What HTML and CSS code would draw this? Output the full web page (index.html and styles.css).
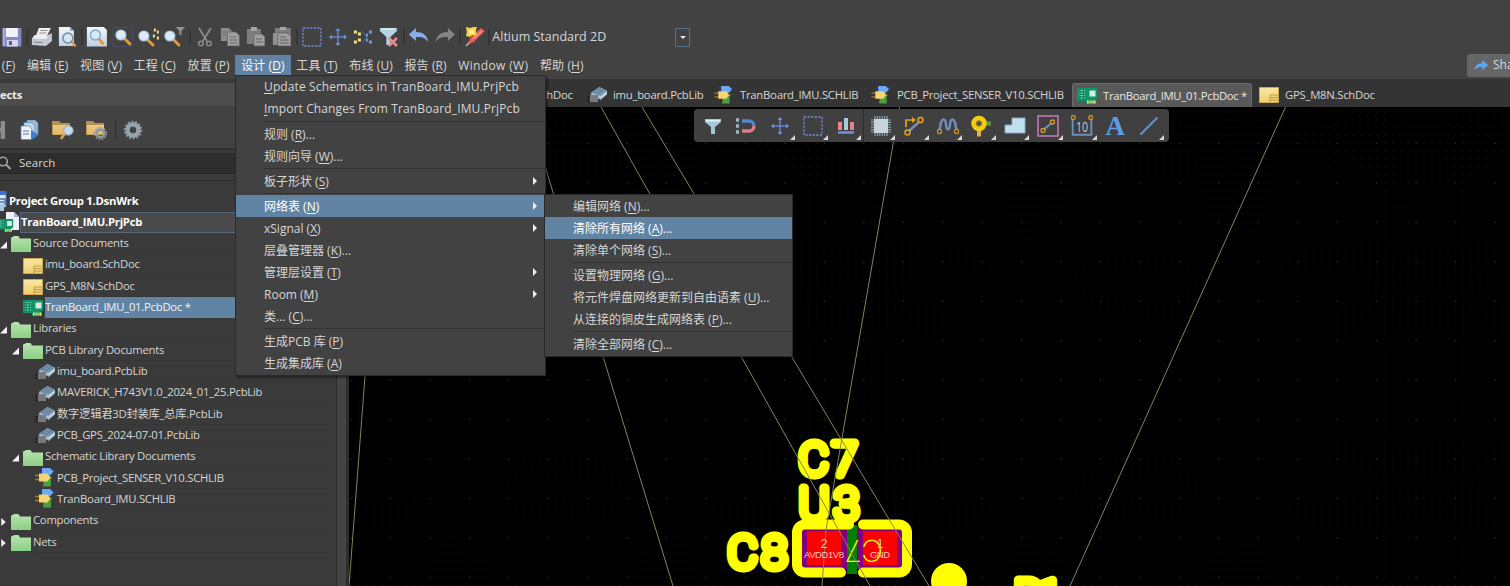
FILE: index.html
```html
<!DOCTYPE html>
<html lang="zh-CN">
<head>
    <meta charset="UTF-8">
    <title>TranBoard_IMU_01.PcbDoc</title>
    <link rel="stylesheet" href="styles.css">
</head>
<body>
<!-- 图标 -->
<svg class="sprite" width="0" height="0">
    <defs>
        <linearGradient id="gFolder" x1="0" y1="0" x2="0" y2="1"><stop offset="0" stop-color="#b8e3b0"/><stop offset="1" stop-color="#8ccf84"/></linearGradient>
        <linearGradient id="gSch" x1="0" y1="0" x2="0" y2="1"><stop offset="0" stop-color="#fae6a4"/><stop offset="1" stop-color="#efd06e"/></linearGradient>
        <linearGradient id="gPaper" x1="0" y1="0" x2="0" y2="1"><stop offset="0" stop-color="#f4f7fb"/><stop offset="1" stop-color="#bfd0e2"/></linearGradient>
        <linearGradient id="gDir" x1="0" y1="0" x2="0" y2="1"><stop offset="0" stop-color="#e9c98c"/><stop offset="1" stop-color="#e3b868"/></linearGradient>
    </defs>
    <symbol id="i-save" viewBox="0 0 20 20"><path d="M.5 1h19v18.500h-19z" fill="#8688c4"/><path d="M4 1h12v9H4z" fill="#f1f2fa"/><path d="M1 1h2v18H1z" fill="#a9abdc"/><path d="M5 13h11v6.500H5z" fill="#d5d7e6"/><path d="M7 14h3v4H7z" fill="#565a8c"/></symbol>
    <symbol id="i-print" viewBox="0 0 20 20"><path d="M7 1h12l-4 8H4z" fill="#f3f3f3"/><path d="M8.500 3.500h7M7.500 6h7" stroke="#8b8b8b"/><path d="M3 8l13 1 4-3v8l-6 5-14-1v-6z" fill="#c5cbd1"/><path d="M3 8l12 1 4-3-5 6-14-.5z" fill="#eef1f3"/><path d="M2 15l9 .7" stroke="#7d8790"/></symbol>
    <symbol id="i-mag" viewBox="0 0 20 20"><path d="M11.500 11.500l5.500 5.500" stroke="#e39a3c" stroke-width="3" stroke-linecap="round"/><circle cx="8" cy="8" r="5" fill="#deebf7" stroke="#a9c7e2" stroke-width="1.200"/></symbol>
    <symbol id="i-preview" viewBox="0 0 20 20"><path d="M1 0h11l4 4v15H1z" fill="url(#gPaper)"/><path d="M12 0v4h4z" fill="#96a9be"/><path d="M13.500 14.500l3.500 4" stroke="#e39a3c" stroke-width="2.500" stroke-linecap="round"/><circle cx="10" cy="11" r="5" fill="#d3e5f3" stroke="#6f8aa5" stroke-width="1.400"/></symbol>
    <symbol id="i-zdoc" viewBox="0 0 20 20"><path d="M0 0h17l3 3v16.500H0z" fill="url(#gPaper)"/><path d="M12 12l4 4.500" stroke="#e39a3c" stroke-width="2.800" stroke-linecap="round"/><circle cx="8.500" cy="8" r="5" fill="#d6ebf8" stroke="#7aa5cc" stroke-width="1.300"/></symbol>
    <symbol id="i-zarea" viewBox="0 0 20 20"><path d="M.5.5h19v19H.5z" fill="none" stroke="#4a5796" stroke-dasharray="1 1"/><use href="#i-mag"/></symbol>
    <symbol id="i-zsel" viewBox="0 0 20 20"><use href="#i-mag" x="-3" y="1" width="20" height="20"/><path d="M15 3h2M18 5h2M14 9h2M18 11h2" stroke="#f2dc8a" stroke-width="3"/></symbol>
    <symbol id="i-zflt" viewBox="0 0 20 20"><use href="#i-mag" x="-3" y="1" width="20" height="20"/><path d="M11 0h9l-3.500 4v4h-2V4z" fill="#8e969c"/></symbol>
    <symbol id="i-cut" viewBox="0 0 20 20"><path d="M4 1l8 13M16 1L8 14" stroke="#8a8a8a" stroke-width="1.800"/><circle cx="6" cy="16.500" r="2.300" fill="none" stroke="#8a8a8a" stroke-width="1.500"/><circle cx="14" cy="16.500" r="2.300" fill="none" stroke="#8a8a8a" stroke-width="1.500"/></symbol>
    <symbol id="i-copy" viewBox="0 0 20 20"><path d="M1 1h8l3 3v10H1z" fill="#8b8b8b"/><path d="M7.500 5h8.500l3.500 3.500V19h-12z" fill="#a0a0a0" stroke="#5d5d5d" stroke-width=".7"/><path d="M9.500 10h7M9.500 13h8M9.500 16h8M3 5h3M3 8h3" stroke="#6b6b6b"/></symbol>
    <symbol id="i-paste" viewBox="0 0 20 20"><path d="M1 2h14v15H1z" fill="#7d7d7d"/><path d="M5 0h6v4H5z" fill="#a6a6a6"/><path d="M8 7h8l3 3v9H8z" fill="#a0a0a0" stroke="#5d5d5d" stroke-width=".7"/><path d="M10 12h6M10 15h7" stroke="#636363"/></symbol>
    <symbol id="i-paste2" viewBox="0 0 20 20"><path d="M3 1h16v14H3z" fill="#7d7d7d"/><path d="M8 0h6v3H8z" fill="#a6a6a6"/><path d="M1 6h8v12H1z" fill="#919191"/><path d="M6 6h9l4 3v10H6z" fill="#a0a0a0" stroke="#5d5d5d" stroke-width=".7"/><path d="M8 10h6M8 13h9M8 16h9" stroke="#636363"/></symbol>
    <symbol id="i-select" viewBox="0 0 20 20"><path d="M1 1h18v18H1z" fill="none" stroke="#6f8ede" stroke-width="1.300" stroke-dasharray="2.200 1.400"/></symbol>
    <symbol id="i-move" viewBox="0 0 20 20"><path d="M10 3v14M3 10h14" stroke="#5f84cf" stroke-width="1.500"/><path d="M10 1l2.500 3h-5zM10 19l2.500-3h-5zM1 10l3-2.500v5zM19 10l-3-2.500v5z" fill="#6d91dc"/></symbol>
    <symbol id="i-unsel" viewBox="0 0 20 20"><path d="M1 5h3M5 7h3M1 15h3M5 13h3" stroke="#f6e27c" stroke-width="3"/><path d="M9 4l5 6-5 6" fill="none" stroke="#4b66a9"/><path d="M16 5h3M13 8h2M16 15h3M13 13h2" stroke="#6c9be8" stroke-width="3"/></symbol>
    <symbol id="i-noflt" viewBox="0 0 20 20"><path d="M1 1h17v3l-6.500 6v8h-4v-8L1 4z" fill="#b4d6e4"/><path d="M3 2h13" stroke="#e4f4fa"/><path d="M10 11l8 8M18 11l-8 8" stroke="#e98989" stroke-width="2.600"/></symbol>
    <symbol id="i-undo" viewBox="0 0 20 20"><path d="M0 7.500L7 1v4c7 0 11 3 12.500 10C16 10.500 13 9.500 7 10v4z" fill="#86aee8"/></symbol>
    <symbol id="i-redo" viewBox="0 0 20 20"><path d="M20 7.500L13 1v4C6 5 2 8 .5 15 4 10.500 7 9.500 13 10v4z" fill="#858585"/></symbol>
    <symbol id="i-wand" viewBox="0 0 20 20"><path d="M2 18l4-8 10-9 4 3L9 15z" fill="#e35f55"/><path d="M8 12l9-8" stroke="#f79d8f" stroke-width="1.500"/><path d="M1 19l3-3" stroke="#bbb" stroke-width="1.500"/><path d="M1 0l4 1 3-1 4 0-1 4 1 5-4-1-3 2-4-1 1-4z" fill="#f3d23f"/><path d="M4 3h5v4H4z" fill="#fdf3a2"/></symbol>

    <symbol id="i-folder" viewBox="0 0 20 16"><path d="M0 2.500C0 1.500.5 1 1.500 1L3 0h4.500L9 2.500h11V16H0z" fill="url(#gFolder)"/></symbol>
    <symbol id="i-sch" viewBox="0 0 20 16"><path d="M.5.5h19v15H.5z" fill="url(#gSch)" stroke="#cda84f"/><path d="M11 15V8h8M11 10.500h8M11 13h8" fill="none" stroke="#b08c36" stroke-width=".8"/></symbol>
    <symbol id="i-pcb" viewBox="0 0 20 16"><path d="M0 0h20v11h-2v5H9v-3H0z" fill="#109468"/><path d="M2 2.500h6M2 5h6M2 7.500h6M2 10h6" stroke="#74d7ae"/><path d="M3 1v11M6.500 1v11" stroke="#0a6649" stroke-width=".7"/><path d="M12.500 2.500h6v6h-6z" fill="#dbe8e2"/><path d="M10 12.500h8.500v3H10z" fill="#dff07b"/><path d="M12 12v4M14 12v4M16 12v4" stroke="#168154" stroke-width=".7"/></symbol>
    <symbol id="i-plib" viewBox="0 0 21 17"><path d="M4 7l9-7 8 4v4l-7 6-9-4z" fill="#a9bfd2"/><path d="M4 6l9-6 8 4-7 5.500z" fill="#7492ac"/><path d="M7 6l8-5M10 7.500l8-5" stroke="#56718b" stroke-width=".7"/><path d="M14 11l7-5" stroke="#e3ebf1"/><path d="M3 8.500h8.500V16H3z" fill="#76797d"/><path d="M0 10h3M0 12.500h3M0 15h3M12 13h2" stroke="#1b1b1b" stroke-width="1.100"/></symbol>
    <symbol id="i-slib" viewBox="0 0 20 19"><path d="M9 9h7v9.500H8z" fill="#4aa03c"/><path d="M4 2h16" stroke="#1c428e" stroke-width="1.600"/><path d="M7 0h8l3.500 3.500L15 7.500H7z" fill="#6ea9f8"/><path d="M0 7.500h5M0 11.500h5M13 9.500h4" stroke="#a47e1b" stroke-width="1.500"/><path d="M4 5.500h8.500l3 4-3 4H4z" fill="#f3d578"/></symbol>
    <symbol id="i-open" viewBox="0 0 7 7"><path d="M7 0v7H0z" fill="#f2f2f2"/></symbol>
    <symbol id="i-shut" viewBox="0 0 7 9"><path d="M1 0l5 4.500L1 9z" fill="#f2f2f2"/></symbol>

    <symbol id="i-docs" viewBox="0 0 20 20"><path d="M7 0h8l3 3v11H7z" fill="#9dbbd9" stroke="#5c86b0" stroke-width=".7"/><path d="M4 2.500h8l3 3V17H4z" fill="#c0d6ea" stroke="#5c86b0" stroke-width=".7"/><path d="M1 6h8l3 3v10.500H1z" fill="#eef4fa" stroke="#5c86b0" stroke-width=".7"/><path d="M3 11h6M3 14h6" stroke="#55789c"/><path d="M11 10l8 5-8 5z" fill="#3e7ed1"/></symbol>
    <symbol id="i-find" viewBox="0 0 22 20"><path d="M0 1h7l2 2h9v12H0z" fill="#b98f4e"/><path d="M1 5h17v9.500H1z" fill="url(#gDir)"/><path d="M12.500 14L9 19" stroke="#dba452" stroke-width="2.600"/><circle cx="16.500" cy="10.500" r="4.700" fill="#c5dcec" stroke="#8da9bd"/></symbol>
    <symbol id="i-dirset" viewBox="0 0 22 20"><path d="M0 1h7l2 2h9v12H0z" fill="#b98f4e"/><path d="M1 5h17v9.500H1z" fill="url(#gDir)"/><circle cx="14.500" cy="13.500" r="5.800" fill="none" stroke="#8d9ba1" stroke-width="1.600" stroke-dasharray="1.800 1.200"/><circle cx="14.500" cy="13.500" r="3.800" fill="none" stroke="#8d9ba1" stroke-width="2.600"/></symbol>
    <symbol id="i-gear" viewBox="0 0 20 20"><circle cx="10" cy="10" r="8.300" fill="none" stroke="#8d9aa3" stroke-width="2" stroke-dasharray="2 1.720"/><circle cx="10" cy="10" r="5.500" fill="none" stroke="#95a3ac" stroke-width="4.500"/></symbol>
    <symbol id="i-disk" viewBox="0 0 20 20"><path d="M0 1h19v18H0z" fill="#8b8b8b"/><path d="M4 1h11v7H4zM5 12h10v7H5z" fill="#5a5a5a"/><path d="M12 13h2v5h-2zM12 2h2v5h-2z" fill="#a7a7a7"/></symbol>
    <symbol id="i-search" viewBox="0 0 14 14"><circle cx="5" cy="5.500" r="4.300" fill="none" stroke="#a2a2a2" stroke-width="1.600"/><path d="M8 8.500l4.500 4.500" stroke="#a2a2a2" stroke-width="2"/></symbol>
    <symbol id="i-prj" viewBox="0 0 22 20"><path d="M8 0h8l5 5v13H8z" fill="#eef0f8"/><path d="M16 0v5h5z" fill="#aab1cb"/><use href="#i-pcb" x="-2" y="7" width="18" height="13"/></symbol>
    <symbol id="i-grp" viewBox="0 0 20 20"><path d="M0 0h19v16H0z" fill="#dbe7f6" stroke="#4d7bc8"/><path d="M0 0h19v4H0z" fill="#3c73d3"/><path d="M13 8h5v6M13 11h4" stroke="#52749c" stroke-width="1.500" fill="none"/><path d="M12 13h5v7h-5z" fill="#afc5de"/></symbol>

    <symbol id="i-filter" viewBox="0 0 20 20"><path d="M2 3h16v3l-6 5v7H8v-7L2 6z" fill="#a3c9d8"/><path d="M3 4h14v1.500H3z" fill="#def1f7"/></symbol>
    <symbol id="i-magnet" viewBox="0 0 20 20"><path d="M0 4h3M0 10h3M0 16h3" stroke="#9eb6bd" stroke-width="3.500"/><path d="M6 5h7a5 5 0 0 1 5 5" fill="none" stroke="#5585d3" stroke-width="3.300"/><path d="M18 10a5 5 0 0 1-5 5H6" fill="none" stroke="#df7e84" stroke-width="3.300"/></symbol>
    <symbol id="i-align" viewBox="0 0 20 20"><path d="M2 6h4v8H2zM14 6h4v8h-4z" fill="#ea8389"/><path d="M8 2h4v12H8z" fill="#a5cbd8"/><path d="M2 16.500h16" stroke="#7390dc" stroke-width="2.500"/></symbol>
    <symbol id="i-chip" viewBox="0 0 20 20"><path d="M4 0v20M6.400 0v20M8.800 0v20M11.200 0v20M13.600 0v20M16 0v20M0 4h20M0 6.400h20M0 8.800h20M0 11.200h20M0 13.600h20M0 16h20" stroke="#8ca9b8" stroke-width="1.100"/><path d="M3 3h14v14H3z" fill="#c8d3da"/></symbol>
    <symbol id="i-route" viewBox="0 0 20 20"><path d="M5 15L15 6" stroke="#718fb9" stroke-width="2.500"/><path d="M2 11V4h8" fill="none" stroke="#e1a31d" stroke-width="1.700"/><path d="M8 1l4 3-4 3z" fill="#e1a31d"/><circle cx="3.500" cy="16.500" r="2.500" fill="#404040" stroke="#e1a31d" stroke-width="1.500"/><circle cx="16.500" cy="4" r="2.500" fill="#404040" stroke="#e1a31d" stroke-width="1.500"/></symbol>
    <symbol id="i-tune" viewBox="0 0 20 20"><path d="M2 14c1.500-2 .5-10 4-10s1 9 4 9 .5-9 4-9 2.500 8 4 10" fill="none" stroke="#6d8ebb" stroke-width="2.300"/><circle cx="2.200" cy="15" r="1.900" fill="#404040" stroke="#d09421" stroke-width="1.200"/><circle cx="17.800" cy="15" r="1.900" fill="#404040" stroke="#d09421" stroke-width="1.200"/></symbol>
    <symbol id="i-via" viewBox="0 0 22 21"><path d="M12 6h9v4h-9z" fill="#5a9d34"/><path d="M7 13h4v8H7z" fill="#e7a95c"/><circle cx="9" cy="8" r="5.300" fill="none" stroke="#f0cc15" stroke-width="5"/><circle cx="9" cy="8" r="2.700" fill="#505050" stroke="#aa8614"/></symbol>
    <symbol id="i-poly" viewBox="0 0 22 20"><path d="M1 17V9h7V2h13v15z" fill="#bfe0ee" stroke="#8ba6c7"/></symbol>
    <symbol id="i-room" viewBox="0 0 22 22"><path d="M1 1h20v20H1z" fill="none" stroke="#cb78bb" stroke-width="1.500"/><path d="M6 15l10-8" stroke="#7190bb" stroke-width="2.200"/><circle cx="6" cy="15.500" r="2" fill="#404040" stroke="#d59b28" stroke-width="1.300"/><circle cx="15.500" cy="7" r="2" fill="#404040" stroke="#d59b28" stroke-width="1.300"/></symbol>
    <symbol id="i-dim" viewBox="0 0 20 20"><path d="M1.500 4v14h17V4" fill="none" stroke="#6d8ebb" stroke-width="1.700"/><circle cx="2" cy="2.300" r="1.800" fill="#404040" stroke="#d09421" stroke-width="1.200"/><circle cx="18" cy="2.300" r="1.800" fill="#404040" stroke="#d09421" stroke-width="1.200"/><text x="10" y="15" font-size="12.500" text-anchor="middle" fill="#c9c9c9" textLength="11" lengthAdjust="spacingAndGlyphs">10</text></symbol>
    <symbol id="i-line" viewBox="0 0 20 20"><path d="M1.500 18.500l17-17" stroke="#5b94dc" stroke-width="2"/></symbol>
    <symbol id="i-share" viewBox="0 0 16 14"><path d="M0 12C1 7 4 4.500 9 4.500V1l6 5.500-6 5.500V8.500C5 8.500 3 9 0 12z" fill="#59a7f5"/></symbol>
</svg>

<div class="ribbon">
    <div class="toolbar">
        <svg class="tool"><use href="#i-save"/></svg><i class="sep"></i>
        <svg class="tool"><use href="#i-print"/></svg>
        <svg class="tool"><use href="#i-preview"/></svg><i class="sep"></i>
        <svg class="tool"><use href="#i-zdoc"/></svg>
        <svg class="tool"><use href="#i-zarea"/></svg>
        <svg class="tool"><use href="#i-zsel"/></svg>
        <svg class="tool"><use href="#i-zflt"/></svg><i class="sep"></i>
        <svg class="tool"><use href="#i-cut"/></svg>
        <svg class="tool"><use href="#i-copy"/></svg>
        <svg class="tool"><use href="#i-paste"/></svg>
        <svg class="tool"><use href="#i-paste2"/></svg><i class="sep"></i>
        <svg class="tool"><use href="#i-select"/></svg>
        <svg class="tool"><use href="#i-move"/></svg>
        <svg class="tool"><use href="#i-unsel"/></svg>
        <svg class="tool"><use href="#i-noflt"/></svg><i class="sep"></i>
        <svg class="tool"><use href="#i-undo"/></svg>
        <svg class="tool"><use href="#i-redo"/></svg><i class="sep"></i>
        <svg class="tool"><use href="#i-wand"/></svg><i class="sep"></i>
        <div class="combo"><span>Altium Standard 2D</span><b></b></div>
    </div>
    <div class="menubar">
        <div class="item">(<u>F</u>)</div>
        <div class="item">编辑 (<u>E</u>)</div>
        <div class="item">视图 (<u>V</u>)</div>
        <div class="item">工程 (<u>C</u>)</div>
        <div class="item">放置 (<u>P</u>)</div>
        <div class="item on">设计 (<u>D</u>)</div>
        <div class="item">工具 (<u>T</u>)</div>
        <div class="item">布线 (<u>U</u>)</div>
        <div class="item">报告 (<u>R</u>)</div>
        <div class="item win">Window (<u>W</u>)</div>
        <div class="item">帮助 (<u>H</u>)</div>
        <div class="share"><svg><use href="#i-share"/></svg>Share</div>
    </div>
</div>

<div class="main">
    <div class="panel">
        <div class="panel-title">ects</div>
        <div class="panel-tools">
            <svg class="disk"><use href="#i-disk"/></svg>
            <svg><use href="#i-docs"/></svg>
            <svg class="wide"><use href="#i-find"/></svg>
            <svg class="wide"><use href="#i-dirset"/></svg>
            <i class="sep"></i>
            <svg><use href="#i-gear"/></svg>
        </div>
        <div class="search"><svg><use href="#i-search"/></svg>Search</div>
        <div class="tree-wrap">
            <div class="tree">
                <div class="row root"><svg class="grp"><use href="#i-grp"/></svg><span>Project Group 1.DsnWrk</span></div>
                <div class="row root prj"><svg class="prjico"><use href="#i-prj"/></svg><span>TranBoard_IMU.PrjPcb</span></div>
                <div class="row l1"><svg class="arr"><use href="#i-open"/></svg><svg class="ico"><use href="#i-folder"/></svg><span>Source Documents</span></div>
                <div class="row l2"><svg class="ico"><use href="#i-sch"/></svg><span>imu_board.SchDoc</span></div>
                <div class="row l2"><svg class="ico"><use href="#i-sch"/></svg><span>GPS_M8N.SchDoc</span></div>
                <div class="row l2 cur"><svg class="ico"><use href="#i-pcb"/></svg><span>TranBoard_IMU_01.PcbDoc *</span></div>
                <div class="row l1"><svg class="arr"><use href="#i-open"/></svg><svg class="ico"><use href="#i-folder"/></svg><span>Libraries</span></div>
                <div class="row l2"><svg class="arr"><use href="#i-open"/></svg><svg class="ico"><use href="#i-folder"/></svg><span>PCB Library Documents</span></div>
                <div class="row l3"><svg class="ico"><use href="#i-plib"/></svg><span>imu_board.PcbLib</span></div>
                <div class="row l3"><svg class="ico"><use href="#i-plib"/></svg><span>MAVERICK_H743V1.0_2024_01_25.PcbLib</span></div>
                <div class="row l3"><svg class="ico"><use href="#i-plib"/></svg><span>数字逻辑君3D封装库_总库.PcbLib</span></div>
                <div class="row l3"><svg class="ico"><use href="#i-plib"/></svg><span>PCB_GPS_2024-07-01.PcbLib</span></div>
                <div class="row l2"><svg class="arr"><use href="#i-open"/></svg><svg class="ico"><use href="#i-folder"/></svg><span>Schematic Library Documents</span></div>
                <div class="row l3"><svg class="ico tall"><use href="#i-slib"/></svg><span>PCB_Project_SENSER_V10.SCHLIB</span></div>
                <div class="row l3"><svg class="ico tall"><use href="#i-slib"/></svg><span>TranBoard_IMU.SCHLIB</span></div>
                <div class="row l1"><svg class="arr"><use href="#i-shut"/></svg><svg class="ico"><use href="#i-folder"/></svg><span>Components</span></div>
                <div class="row l1"><svg class="arr"><use href="#i-shut"/></svg><svg class="ico"><use href="#i-folder"/></svg><span>Nets</span></div>
            </div>
            <div class="scroll"></div>
        </div>
    </div>

    <div class="editor">
        <div class="tabs">
            <div class="tab t1">GPS_M8N.SchDoc</div>
            <div class="tab t2"><svg><use href="#i-plib"/></svg>imu_board.PcbLib</div>
            <div class="tab t3"><svg><use href="#i-slib"/></svg>TranBoard_IMU.SCHLIB</div>
            <div class="tab t4"><svg><use href="#i-slib"/></svg>PCB_Project_SENSER_V10.SCHLIB</div>
            <div class="tab t5 on"><svg><use href="#i-pcb"/></svg>TranBoard_IMU_01.PcbDoc *</div>
            <div class="tab t6"><svg><use href="#i-sch"/></svg>GPS_M8N.SchDoc</div>
        </div>
        <div class="board">
            <svg class="pcb" viewBox="349 107 1161 479">
                <defs>
                    <pattern id="minor" x="705.500" y="458.500" width="7.890" height="7.890" patternUnits="userSpaceOnUse"><path d="M0 0h1v1H0z" fill="#1c1c1c"/></pattern>
                    <pattern id="major" x="705.500" y="458.500" width="39.450" height="39.450" patternUnits="userSpaceOnUse"><path d="M0 0h1v1H0z" fill="#3c3c3c"/></pattern>
                </defs>
                <path d="M349 107h1161v479H349z" fill="url(#minor)"/>
                <path d="M349 107h1161v479H349z" fill="url(#major)"/>

                <!-- 焊盘 -->
                <path d="M800 527h104v42H800z" fill="#800080"/>
                <path d="M847 525h10v49h-10z" fill="#008000"/>
                <path d="M807 531h34v34h-34zM863 531h34v34h-34z" fill="#f00"/>
                <!-- 丝印 -->
                <path class="silk" d="M841 572.500h-36a8 8 0 0 1-8-8v-32a8 8 0 0 1 8-8h44M863 524.500h36a8 8 0 0 1 8 8v32a8 8 0 0 1-8 8h-36"/>
                <text class="desig" x="799 832.500" y="475">C7</text>
                <text class="desig" x="799 834" y="520">U3</text>
                <text class="desig" x="728 762" y="568">C8</text>
                <text class="desig" x="1014 1038" y="612">R1</text>
                <circle cx="949" cy="581" r="18" fill="#ff0"/>
                <text class="ref" transform="rotate(180 864 551)" x="845" y="562" textLength="38">C7</text>

                <!-- 飞线 -->
                <g class="rats">
                    <path d="M601 107L870 586M642 107L929 586M527 107L673 586M899.500 107L826 530l-4 56M1285.500 107L1070 586M365 376L349 586"/>
                </g>
                <text class="net two" x="824" y="548">2</text>
                <text class="net" x="824" y="557.500" textLength="40">AVDD1V8</text>
                <text class="net two" x="880" y="548">1</text>
                <text class="net" x="880" y="557.500" textLength="20">GND</text>
            </svg>
            <div class="active-bar">
                <div class="act"><svg><use href="#i-filter"/></svg></div>
                <div class="act"><svg><use href="#i-magnet"/></svg></div>
                <div class="act more"><svg><use href="#i-move"/></svg></div>
                <div class="act more"><svg><use href="#i-select"/></svg></div>
                <div class="act more line"><svg><use href="#i-align"/></svg></div>
                <div class="act more"><svg><use href="#i-chip"/></svg></div>
                <div class="act more"><svg><use href="#i-route"/></svg></div>
                <div class="act more"><svg class="big"><use href="#i-tune"/></svg></div>
                <div class="act more"><svg class="big"><use href="#i-via"/></svg></div>
                <div class="act more"><svg class="big"><use href="#i-poly"/></svg></div>
                <div class="act more"><svg class="big"><use href="#i-room"/></svg></div>
                <div class="act more"><svg class="big"><use href="#i-dim"/></svg></div>
                <div class="act"><b>A</b></div>
                <div class="act more"><svg><use href="#i-line"/></svg></div>
            </div>
        </div>
    </div>
</div>

<div class="menu design">
    <div class="mi en"><u>U</u>pdate Schematics in TranBoard_IMU.PrjPcb</div>
    <div class="mi en"><u>I</u>mport Changes From TranBoard_IMU.PrjPcb</div>
    <hr>
    <div class="mi">规则 (<u>R</u>)...</div>
    <div class="mi">规则向导 (<u>W</u>)...</div>
    <hr>
    <div class="mi sub">板子形状 (<u>S</u>)</div>
    <hr>
    <div class="mi sub on">网络表 (<u>N</u>)</div>
    <div class="mi sub">xSignal (<u>X</u>)</div>
    <div class="mi">层叠管理器 (<u>K</u>)...</div>
    <div class="mi sub">管理层设置 (<u>T</u>)</div>
    <div class="mi sub">Room (<u>M</u>)</div>
    <div class="mi">类... (<u>C</u>)...</div>
    <hr>
    <div class="mi">生成PCB 库 (<u>P</u>)</div>
    <div class="mi">生成集成库 (<u>A</u>)</div>
</div>

<div class="menu netlist">
    <div class="mi">编辑网络 (<u>N</u>)...</div>
    <div class="mi on">清除所有网络 (<u>A</u>)...</div>
    <div class="mi">清除单个网络 (<u>S</u>)...</div>
    <hr>
    <div class="mi">设置物理网络 (<u>G</u>)...</div>
    <div class="mi">将元件焊盘网络更新到自由语素 (<u>U</u>)...</div>
    <div class="mi">从连接的铜皮生成网络表 (<u>P</u>)...</div>
    <hr>
    <div class="mi">清除全部网络 (<u>C</u>)...</div>
</div>
</body>
</html>
```
FILE: styles.css
```css
*{margin: 0; padding: 0; box-sizing: border-box;}
body{width: 1510px; height: 586px; overflow: hidden; display: flex; flex-direction: column; background: #404040; color: #d6d6d6; font: 12px/22px "Open Sans", "Noto Sans CJK SC", sans-serif; white-space: nowrap;}
svg{display: block; flex: none;}
.sprite{position: absolute;}
u{text-decoration: underline; text-underline-offset: 2px;}

/* 顶部工具栏 */
.ribbon{height: 79px; padding-top: 24px; background: #424242; flex: none;}
.toolbar{height: 26px; display: flex; align-items: center; margin-left: -1px;}
.tool{width: 25.800px; height: 20px;}
.toolbar .sep{width: 2px; height: 16px; margin: 0 1px; background: #363636; flex: none;}
.combo{display: flex; align-items: center; justify-content: space-between; width: 198px; margin-left: 1px; font-size: 12.500px;}
.combo b{width: 15px; height: 19px; border: 1px solid #56708a; display: flex; align-items: center; justify-content: center;}
.combo b::after{content: ""; border: 3.500px solid transparent; border-top-color: #e6e6e6; border-bottom: 0;}
.menubar{height: 24px; display: flex; align-items: center; margin-top: 3px; margin-left: -4px;}
.item{height: 21px; line-height: 22px; padding: 0 5.800px; letter-spacing: .1px;}
.item.win{letter-spacing: .35px;}
.item.on{background: #6284a4; color: #fff;}
.share{margin-left: auto; width: 43px; height: 23px; padding-left: 7px; background: #666; border-radius: 3px 0 0 3px; display: flex; align-items: center; gap: 4px; overflow: hidden;}
.share svg{width: 15px; height: 13px;}

.main{flex: 1; display: flex; min-height: 0;}

/* 项目面板 */
.panel{width: 349px; background: #3a3a3a; padding-top: 4px; flex: none; display: flex; flex-direction: column; border-right: 3px solid #2e2e2e; font-size: 11.300px; letter-spacing: -.25px;}
.panel-title{height: 23px; line-height: 23px; background: #4d4d4d; font-weight: bold; color: #ececec;}
.panel-tools{height: 44px; padding-top: 6px; background: #424242; display: flex; align-items: center; border-bottom: 2px solid #2f2f2f;}
.panel-tools svg{width: 20px; height: 20px; margin-right: 12px;}
.panel-tools svg.wide{width: 22px;}
.panel-tools .disk{margin: 0 14px 0 -14px;}
.panel-tools .sep{width: 1px; height: 21px; background: #303030; margin-right: 7px; margin-left: -5px;}
.search{height: 21px; margin-top: 3px; background: #2d2d2d; border-bottom: 1px solid #252525; display: flex; align-items: center; gap: 7px; font-size: 11.500px; letter-spacing: 0;}
.search svg{width: 14px; height: 14px; margin-left: -2px;}
.tree-wrap{flex: 1; margin-top: 6px; border-top: 1px solid #2a2a2a; display: flex; min-height: 0;}
.tree{flex: 1; padding-top: 9.500px;}
.scroll{width: 10px; background: #444; border-left: 1px solid #2c2c2c;}
.row{height: 21.340px; line-height: 19px; display: flex; align-items: center;}
.row span{flex: 1; height: 21.340px; margin-right: 5px; border-bottom: 1px solid #363636;}
.row .ico{width: 20px; height: 16px; margin-top: 1px; margin-right: 2px;}
.row .ico.tall{height: 19px; margin-top: -2px;}
.row .arr{width: 7px; height: 8px; margin-top: 2px; margin-right: 4px;}
.l1 .arr{margin-left: 0;}
.l2 > :first-child{margin-left: 23px;}
.l2 > .arr:first-child{margin-left: 12px;}
.l3 > :first-child{margin-left: 35px;}
.root{font-weight: bold; color: #fff;}
.grp{width: 20px; height: 20px; margin-left: -13px; margin-right: 2px;}
.prjico{width: 22px; height: 20px; margin-left: -2px;}
.row.prj span{background: #4a4a4a; border: 1px solid #55697d; line-height: 17px;}
.row.cur span{background: #6284a4; color: #f2f2f2; border: 0;}

/* 文档标签 */
.editor{flex: 1; display: flex; flex-direction: column; min-width: 0;}
.tabs{height: 28px; background: #343434; display: flex; align-items: flex-end; flex: none; padding-left: 129px; font-size: 11.300px; letter-spacing: -.25px;}
.tab{height: 24px; line-height: 24px; display: flex; align-items: center; padding-left: 5px;}
.tab svg{width: 20px; height: 18px; margin-right: 6px;}
.t1{width: 104px;}
.t2{width: 127px;}
.t3{width: 157px;}
.t4{width: 206px;}
.t5{width: 180px; margin-right: 2px;}
.tab.on{background: #595959; border: 1px solid #6b6b6b; border-bottom: 0; border-radius: 3px 3px 0 0; color: #e6e6e6; padding-left: 4px; line-height: 21px; letter-spacing: -.32px;}
.t6 svg{height: 16px;}

/* 画布 */
.board{flex: 1; background: #000; position: relative;}
.pcb{width: 1161px; height: 479px;}
.rats{fill: none; stroke: #84845a; stroke-width: 1;}
.silk{fill: none; stroke: #ff0; stroke-width: 10; stroke-linecap: round;}
.desig{font: 100 45px Roboto, sans-serif; fill: #ff0; stroke: #ff0; stroke-width: 9; stroke-linejoin: round;}
.ref{font: 200 30px Inter, sans-serif; fill: #ff0;}
.net{font-family: "Liberation Sans", sans-serif; font-size: 9.500px; letter-spacing: 0; fill: #f4c8c8; text-anchor: middle;}
.net.two{font-size: 12px;}
.active-bar{position: absolute; left: 345px; top: 2px; width: 475px; height: 33px; padding-left: 2px; background: #404040; border-radius: 4px; display: flex;}
.act{width: 33.550px; display: flex; align-items: center; justify-content: center; position: relative;}
.act svg{width: 20px; height: 20px;}
.act svg.big{width: 22px; height: 22px;}
.act b{font: bold 27px/30px "Liberation Serif", serif; color: #5f9de6;}
.more::after{content: ""; position: absolute; right: 2px; bottom: 2px; border: 5px solid transparent; border-width: 5px 0 0 5px; border-left-color: transparent; border-top: 0; border-bottom: 5px solid #d8d8d8;}
.line{border-right: 1px solid #2c2c2c;}

/* 下拉菜单 */
.menu{position: absolute; background: #424242; border: 1px solid #2a2a2a; box-shadow: 2px 2px 2px rgba(0,0,0,.4);}
.design{left: 235px; top: 75px; width: 311px; height: 301px;}
.netlist{left: 544px; top: 194px; width: 249px; height: 163px;}
.mi{height: 22px; line-height: 24px; padding-left: 28px; position: relative;}
.mi.en{line-height: 21px; letter-spacing: .12px;}
.mi.on{background: #6284a4; color: #fff;}
.menu hr{height: 1px; margin: 1px 0 1px 28px; border: 0; background: #333;}
.sub::after{content: ""; position: absolute; right: 8px; top: 7px; border: 4px solid transparent; border-left-color: #f0f0f0; border-right: 0;}
```
